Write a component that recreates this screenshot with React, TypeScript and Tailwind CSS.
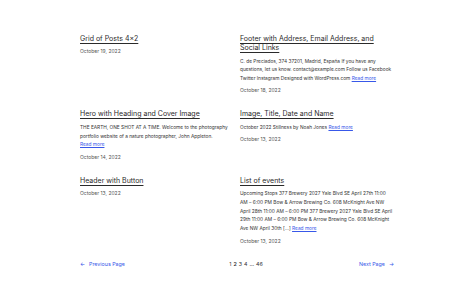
const posts = [
    {
        title: "Grid of Posts 4×2",
        excerpt: null,
        date: "October 19, 2022",
    },
    {
        title: "Footer with Address, Email Address, and Social Links",
        excerpt: [
            "C. de Preciados, 374 37201, Madrid, España If you have any",
            "questions, let us know. contact@example.com Follow us Facebook",
            "Twitter Instagram Designed with WordPress.com",
        ],
        date: "October 18, 2022",
    },
    {
        title: "Hero with Heading and Cover Image",
        excerpt: [
            "THE EARTH, ONE SHOT AT A TIME. Welcome to the photography",
            "portfolio website of a nature photographer, John Appleton.",
            "",
        ],
        date: "October 14, 2022",
    },
    {
        title: "Image, Title, Date and Name",
        excerpt: ["October 2022 Stillness by Noah Jones"],
        date: "October 13, 2022",
    },
    {
        title: "Header with Button",
        excerpt: null,
        date: "October 13, 2022",
    },
    {
        title: "List of events",
        excerpt: [
            "Upcoming Stops 377 Brewery 2027 Yale Blvd SE April 27th 11:00",
            "AM – 6:00 PM Bow & Arrow Brewing Co. 608 McKnight Ave NW",
            "April 28th 11:00 AM – 6:00 PM 377 Brewery 2027 Yale Blvd SE April",
            "29th 11:00 AM – 6:00 PM Bow & Arrow Brewing Co. 608 McKnight",
            "Ave NW April 30th […]",
        ],
        date: "October 13, 2022",
    },
];

export default function App() {
    return (
        <main className="min-h-screen bg-white font-['Inter',sans-serif] text-[#1e1e1e]">
            <div className="pl-[80px] pt-[34px]">
                <div className="grid grid-cols-[154px_158px] gap-x-[6px] gap-y-[15px]">
                    {posts.map((post, idx) => (
                        <article key={idx}>
                            <h2 className="max-w-[146px] text-[7px] leading-[9px] text-[#2a2a2a] underline decoration-[0.5px] underline-offset-[1.5px]">
                                {post.title}
                            </h2>
                            {post.excerpt && (
                                <p className="mt-[4.5px] whitespace-nowrap text-[4.8px] leading-[8.7px] text-[#333]">
                                    {post.excerpt.map((line, i) => (
                                        <span key={i}>
                                            {i > 0 && <br />}
                                            {line}
                                        </span>
                                    ))}{" "}
                                    <span className="text-[#3858e9] underline decoration-[0.4px]">Read more</span>
                                </p>
                            )}
                            <div className="mt-[3.8px] text-[5px] leading-[8px] text-[#555]">{post.date}</div>
                        </article>
                    ))}
                </div>

                <nav className="mt-[15px] flex w-[314px] items-center justify-between text-[5.3px] leading-[8px]">
                    <span className="flex items-center gap-[4px] text-[#3858e9]">
                        <span>←</span> Previous Page
                    </span>
                    <span className="ml-[8px] flex gap-[2px] text-[#333]">
                        <span>1</span>
                        <span className="font-semibold">2</span>
                        <span>3</span>
                        <span>4</span>
                        <span>…</span>
                        <span>46</span>
                    </span>
                    <span className="flex items-center gap-[4px] text-[#3858e9]">
                        Next Page <span>→</span>
                    </span>
                </nav>
            </div>
        </main>
    );
}
